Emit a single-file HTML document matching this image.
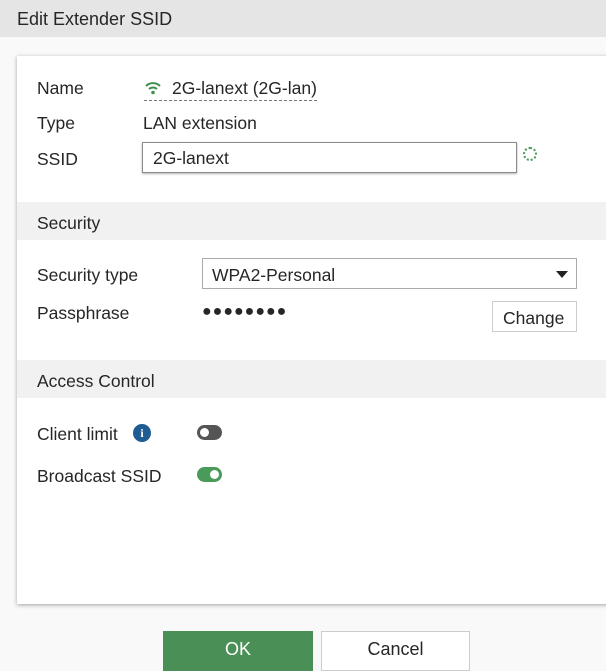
<!DOCTYPE html>
<html><head><style>
*{margin:0;padding:0;box-sizing:border-box}
body{width:606px;height:669px;background:#f9f9f9;font-family:"Liberation Sans",sans-serif;color:#262626;font-size:17.5px;position:relative;overflow:hidden}
.a{position:absolute;white-space:nowrap}
.hdr{left:0;top:0;width:606px;height:37px;background:#e5e5e5}
.card{left:17px;top:56px;width:600px;height:548px;background:#fff;box-shadow:0 1px 4px rgba(0,0,0,.35)}
.sec{left:17px;width:600px;height:38px;background:#f1f1f1}
.box{border:1px solid #8a8a8a;background:#fff}
.tog{width:25px;height:15px;border-radius:8px}
.tog i{position:absolute;top:3px;width:9px;height:9px;border-radius:50%;background:#fff}
</style></head><body>
<div class="a hdr"></div>
<div class="a" style="left:17px;top:9px;font-size:18px">Edit Extender SSID</div>
<div class="a card"></div>
<div class="a" style="left:37px;top:78px">Name</div>
<svg class="a" style="left:144px;top:81px" width="18" height="14" viewBox="0 0 18 14"><path d="M2 5a10 10 0 0 1 14 0M5 8a6 6 0 0 1 8 0" stroke="#3f8f4f" stroke-width="2" fill="none"/><circle cx="9" cy="11.5" r="1.8" fill="#3f8f4f"/></svg>
<div class="a" style="top:78px;border-bottom:1px dashed #777;padding-bottom:1px;left:144px;padding-left:28px">2G-lanext (2G-lan)</div>
<div class="a" style="left:37px;top:113px">Type</div>
<div class="a" style="left:143px;top:113px">LAN extension</div>
<div class="a" style="left:37px;top:149px">SSID</div>
<div class="a box" style="left:142px;top:142px;width:375px;height:31px;box-shadow:0 1px 2px rgba(0,0,0,.3)"></div>
<div class="a" style="left:153px;top:148px">2G-lanext</div>
<div class="a" style="left:523px;top:147px;width:14px;height:14px;border:2px dotted #4a9a5a;border-radius:50%"></div>
<div class="a sec" style="top:202px"></div>
<div class="a" style="left:37px;top:213px">Security</div>
<div class="a" style="left:37px;top:265px">Security type</div>
<div class="a box" style="left:202px;top:258px;width:375px;height:31px;border-color:#aaa"></div>
<div class="a" style="left:212px;top:265px">WPA2-Personal</div>
<div class="a" style="left:556px;top:271px;border-left:6px solid transparent;border-right:6px solid transparent;border-top:7px solid #222"></div>
<div class="a" style="left:37px;top:303px">Passphrase</div>
<div class="a" style="left:202px;top:303px;font-size:16px;letter-spacing:1px">●●●●●●●●</div>
<div class="a box" style="left:492px;top:301px;width:85px;height:31px;border-color:#ccc"></div>
<div class="a" style="left:503px;top:308px">Change</div>
<div class="a sec" style="top:360px"></div>
<div class="a" style="left:37px;top:371px">Access Control</div>
<div class="a" style="left:37px;top:424px">Client limit</div>
<div class="a" style="left:133px;top:424px;width:18px;height:18px;border-radius:50%;background:#1f5c93;color:#fff;font-size:12px;font-weight:bold;text-align:center;line-height:18px;font-family:'Liberation Serif',serif">i</div>
<div class="a tog" style="left:197px;top:425px;background:#555"><i style="left:3px"></i></div>
<div class="a" style="left:37px;top:466px">Broadcast SSID</div>
<div class="a tog" style="left:197px;top:467px;background:#4a9a5a"><i style="left:13px"></i></div>
<div class="a" style="left:163px;top:631px;width:150px;height:40px;background:#4a8f56;color:#fff;text-align:center;line-height:36px;font-size:18px">OK</div>
<div class="a" style="left:321px;top:631px;width:149px;height:40px;background:#fff;border:1px solid #ccc;text-align:center;line-height:35px;font-size:18px">Cancel</div>
</body></html>
